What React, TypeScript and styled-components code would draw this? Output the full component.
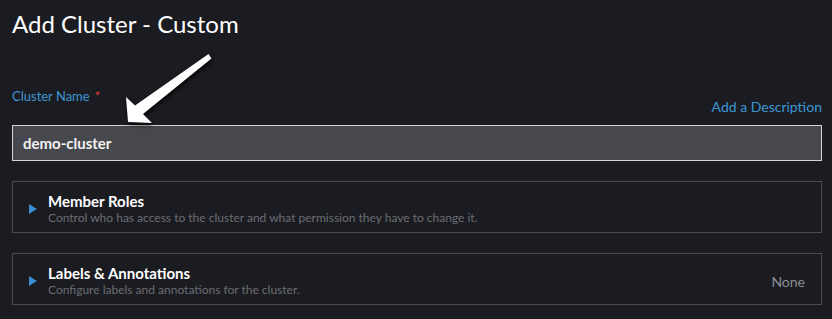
import React from "react";
import styled, { createGlobalStyle } from "styled-components";

const Global = createGlobalStyle`
  html, body { margin: 0; padding: 0; background: #1b1c21; }
  body { font-family: Lato, "Noto Sans", "Liberation Sans", sans-serif; }
  * { box-sizing: border-box; }
`;

const Page = styled.div`
  position: relative;
  width: 832px;
  height: 319px;
  padding: 0 10px 0 12px;
  background: #1b1c21;
  overflow: hidden;
`;

const Title = styled.h1`
  margin: 9px 0 0;
  font-size: 24px;
  line-height: 29px;
  font-weight: 400;
  color: #ffffff;
`;

const FieldHeader = styled.div`
  display: flex;
  justify-content: space-between;
  align-items: flex-start;
  margin-top: 50px;
`;

const Label = styled.label`
  font-size: 13px;
  line-height: 16px;
  color: #3b97d3;
`;

const Required = styled.span`
  color: #e5383b;
  margin-left: 5px;
`;

const LinkButton = styled.a`
  margin-top: 10px;
  font-size: 14px;
  line-height: 17px;
  color: #3b97d3;
  cursor: pointer;
`;

const Input = styled.input`
  display: block;
  width: 100%;
  height: 36px;
  margin-top: 10px;
  padding: 0 10px;
  border: 1px solid #d4d4d7;
  background: #47484d;
  color: #f2f2f2;
  font-family: Lato, "Noto Sans", sans-serif;
  font-size: 15px;
  font-weight: 700;
  outline: none;
`;

const Panel = styled.div<{ $top: number }>`
  display: flex;
  align-items: center;
  margin-top: ${(p) => p.$top}px;
  height: 52px;
  padding: 0 16px 0 16px;
  border: 1px solid #4a4b51;
`;

const Caret = styled.span`
  width: 0;
  height: 0;
  border-top: 5px solid transparent;
  border-bottom: 5px solid transparent;
  border-left: 8px solid #3a8fd3;
  margin-right: 11px;
  margin-top: 3px;
`;

const PanelText = styled.div`
  flex: 1;
  display: flex;
  flex-direction: column;
  margin-top: 3px;
`;

const PanelTitle = styled.div`
  font-size: 15px;
  line-height: 18px;
  font-weight: 700;
  color: #ffffff;
`;

const PanelDesc = styled.div`
  font-size: 12px;
  line-height: 15px;
  color: #6c6d72;
`;

const PanelValue = styled.div`
  font-size: 14px;
  color: #8c8d92;
  margin-top: 4px;
`;

const ArrowOverlay = styled.svg`
  position: absolute;
  left: 0;
  top: 0;
  pointer-events: none;
  filter: drop-shadow(1px 2px 2px rgba(0, 0, 0, 0.9));
`;

export default function App() {
  return (
    <>
      <Global />
      <Page>
        <Title>Add Cluster - Custom</Title>
        <FieldHeader>
          <Label>
            Cluster Name<Required>*</Required>
          </Label>
          <LinkButton>Add a Description</LinkButton>
        </FieldHeader>
        <Input defaultValue="demo-cluster" />
        <Panel $top={20}>
          <Caret />
          <PanelText>
            <PanelTitle>Member Roles</PanelTitle>
            <PanelDesc>
              Control who has access to the cluster and what permission they have to change it.
            </PanelDesc>
          </PanelText>
        </Panel>
        <Panel $top={20}>
          <Caret />
          <PanelText>
            <PanelTitle>Labels &amp; Annotations</PanelTitle>
            <PanelDesc>Configure labels and annotations for the cluster.</PanelDesc>
          </PanelText>
          <PanelValue>None</PanelValue>
        </Panel>
        <ArrowOverlay width="832" height="319" viewBox="0 0 832 319">
          <polygon
            points="128,122 126,97 135,105.5 208.5,54 211.5,58.5 143,114 152,123"
            fill="#ffffff"
            strokeLinejoin="round"
          />
        </ArrowOverlay>
      </Page>
    </>
  );
}
